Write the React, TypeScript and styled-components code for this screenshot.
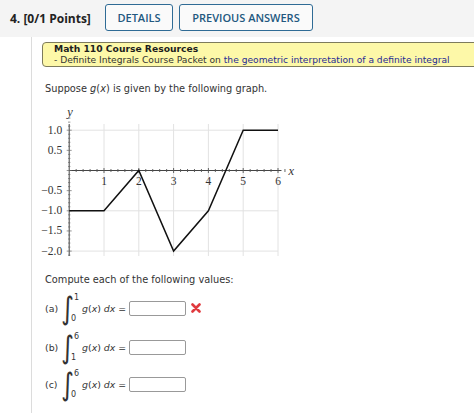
import React from "react";
import styled, { createGlobalStyle } from "styled-components";

const Global = createGlobalStyle`
  html, body { margin: 0; padding: 0; background: #fff; overflow: hidden; }
  body { font-family: "DejaVu Sans", Verdana, sans-serif; color: #222; }
`;

const Page = styled.div`
  width: 474px;
  height: 413px;
  display: flex;
  flex-direction: column;
  overflow: hidden;
`;

const Header = styled.div`
  height: 37px;
  background: #f4f4f4;
  display: flex;
  align-items: center;
  padding-left: 10px;
  box-sizing: border-box;
  gap: 6px;
`;

const Points = styled.div`
  font-family: "Open Sans", sans-serif;
  font-weight: 700;
  font-size: 12px;
  color: #222;
  width: 89px;
`;

const HeadButton = styled.div<{ $w: number }>`
  width: ${(p) => p.$w}px;
  height: 27px;
  box-sizing: border-box;
  border: 1.5px solid #2f6b95;
  border-radius: 3px;
  background: #fafafa;
  display: flex;
  align-items: center;
  justify-content: center;
  font-family: "Open Sans", sans-serif;
  font-weight: 600;
  font-size: 11px;
  color: #22587f;
  margin-top: -2px;
`;

const Body = styled.div`
  flex: 1;
  margin-left: 31px;
  border-left: 1px solid #dcdcdc;
  padding-left: 10px;
  padding-top: 5px;
  display: flex;
  flex-direction: column;
`;

const Resource = styled.div`
  width: 440px;
  flex-shrink: 0;
  height: 25px;
  box-sizing: border-box;
  background: #fdf8a8;
  border: 1px solid #7d7b5c;
  border-radius: 4px;
  padding: 1px 0 0 11px;
  font-size: 9.15px;
  line-height: 10.5px;
  color: #333;
  white-space: nowrap;
`;

const ResTitle = styled.div`
  font-weight: 700;
  font-size: 9.2px;
  color: #1e1e1e;
`;

const Link = styled.span`
  color: #262b94;
`;

const Para = styled.div<{ $mt: number }>`
  margin-top: ${(p) => p.$mt}px;
  margin-left: 3px;
  font-size: 9.8px;
  color: #333;
`;

const Em = styled.span`
  font-style: italic;
`;

const Graph = styled.svg`
  display: block;
  margin-left: -2px;
  margin-top: 10px;
`;

const Part = styled.div<{ $mt: number }>`
  display: flex;
  align-items: center;
  margin-top: ${(p) => p.$mt}px;
  margin-left: 3px;
  height: 28px;
  font-size: 9.4px;
  color: #333;
`;

const PartLabel = styled.span`
  width: 15px;
`;

const IntSign = styled.span`
  font-family: "DejaVu Sans", sans-serif;
  font-size: 31px;
  line-height: 28px;
  color: #333;
  display: inline-block;
  width: 11px;
  transform: scaleX(0.8);
`;

const Limits = styled.span`
  display: flex;
  flex-direction: column;
  justify-content: space-between;
  height: 30px;
  font-size: 8px;
  width: 10px;
`;

const Upper = styled.span`
  margin-left: 3px;
  line-height: 9px;
`;

const Lower = styled.span`
  margin-left: 0px;
  line-height: 9px;
`;

const Expr = styled.span`
  margin-left: 1px;
  margin-right: 3px;
`;

const Box = styled.div`
  width: 57px;
  height: 15px;
  box-sizing: border-box;
  border: 1px solid #999;
  border-radius: 2px;
  background: #fff;
`;

const Wrong = styled.svg`
  margin-left: 5px;
`;

const X0 = 29.2;
const Y0 = 66.5;
const SX = 34.8;
const SY = 40.3;
const px = (x: number) => X0 + x * SX;
const py = (y: number) => Y0 - y * SY;

function Chart() {
  const pts: [number, number][] = [
    [0, -1],
    [1, -1],
    [2, 0],
    [3, -2],
    [4, -1],
    [5, 1],
    [6, 1],
  ];
  const top = 20;
  const bottom = 152;
  const xTicks: number[] = [];
  for (let i = 1; i <= 31; i++) xTicks.push(i * 0.2);
  const yTicks: number[] = [];
  for (let i = -21; i <= 13; i++) yTicks.push(i * 0.1);
  return (
    <Graph width="262" height="158" viewBox="0 0 262 158">
      {[1, 2, 3, 4, 5, 6].map((i) => (
        <line key={"v" + i} x1={px(i)} x2={px(i)} y1={top} y2={bottom} stroke="#e2e2e2" strokeWidth="1" />
      ))}
      {[1, -1, -2].map((j) => (
        <line key={"h" + j} x1={X0} x2={px(6)} y1={py(j)} y2={py(j)} stroke="#e2e2e2" strokeWidth="1" />
      ))}
      <line x1={X0} x2={X0} y1={top} y2={bottom} stroke="#444" strokeWidth="1" />
      <line x1={X0} x2={px(6.1)} y1={Y0} y2={Y0} stroke="#444" strokeWidth="1" />
      {xTicks.map((t, i) => {
        const major = Math.abs(t - Math.round(t)) < 0.01;
        return (
          <line key={"xt" + i} x1={px(t)} x2={px(t)} y1={Y0 - (major ? 2.5 : 1.5)} y2={Y0 + (major ? 2.5 : 1.5)} stroke="#555" strokeWidth="0.9" />
        );
      })}
      {yTicks.map((t, i) => {
        const major = Math.abs(t * 2 - Math.round(t * 2)) < 0.01;
        return (
          <line key={"yt" + i} x1={X0 - (major ? 2.5 : 1.2)} x2={X0 + (major ? 2.5 : 1.2)} y1={py(t)} y2={py(t)} stroke="#666" strokeWidth="0.7" />
        );
      })}
      <g fontFamily="'Liberation Serif', serif" fontSize="11.5" fill="#333">
        {[1, 2, 3, 4, 5, 6].map((i) => (
          <text key={"xl" + i} x={px(i)} y={Y0 + 14} textAnchor="middle">
            {i}
          </text>
        ))}
        {[
          [1, "1.0"],
          [0.5, "0.5"],
          [-0.5, "\u22120.5"],
          [-1, "\u22121.0"],
          [-1.5, "\u22121.5"],
          [-2, "\u22122.0"],
        ].map(([v, s]) => (
          <text key={"yl" + s} x={X0 - 7} y={py(v as number) + 3.5} textAnchor="end">
            {s as string}
          </text>
        ))}
        <text x={px(6.3)} y={Y0 + 4} fontStyle="italic" fontSize="12.5">
          x
        </text>
        <text x={X0 - 2} y={12} fontStyle="italic" fontSize="12.5">
          y
        </text>
      </g>
      <polyline
        points={pts.map(([x, y]) => `${px(x)},${py(y)}`).join(" ")}
        fill="none"
        stroke="#111"
        strokeWidth="1.5"
      />
    </Graph>
  );
}

function Integral({ label, lo, hi, mt, wrong }: { label: string; lo: string; hi: string; mt: number; wrong?: boolean }) {
  return (
    <Part $mt={mt}>
      <PartLabel>{label}</PartLabel>
      <IntSign>∫</IntSign>
      <Limits>
        <Upper>{hi}</Upper>
        <Lower>{lo}</Lower>
      </Limits>
      <Expr>
        <Em>g</Em>(<Em>x</Em>) <Em>dx</Em> =
      </Expr>
      <Box />
      {wrong && (
        <Wrong width="10" height="10" viewBox="0 0 10 10">
          <path d="M1.5 1.5 L8.5 8.5 M8.5 1.5 L1.5 8.5" stroke="#e03a3e" strokeWidth="2.6" strokeLinecap="round" />
        </Wrong>
      )}
    </Part>
  );
}

export default function App() {
  return (
    <Page>
      <Global />
      <Header>
        <Points>4. [0/1 Points]</Points>
        <HeadButton $w={68}>DETAILS</HeadButton>
        <HeadButton $w={134}>PREVIOUS ANSWERS</HeadButton>
      </Header>
      <Body>
        <Resource>
          <ResTitle>Math 110 Course Resources</ResTitle>
          <div>
            - Definite Integrals Course Packet on <Link>the geometric interpretation of a definite integral</Link>
          </div>
        </Resource>
        <Para $mt={16}>
          Suppose <Em>g</Em>(<Em>x</Em>) is given by the following graph.
        </Para>
        <Chart />
        <Para $mt={12}>Compute each of the following values:</Para>
        <Integral label="(a)" lo="0" hi="1" mt={9} wrong />
        <Integral label="(b)" lo="1" hi="6" mt={11} />
        <Integral label="(c)" lo="0" hi="6" mt={9} />
      </Body>
    </Page>
  );
}
